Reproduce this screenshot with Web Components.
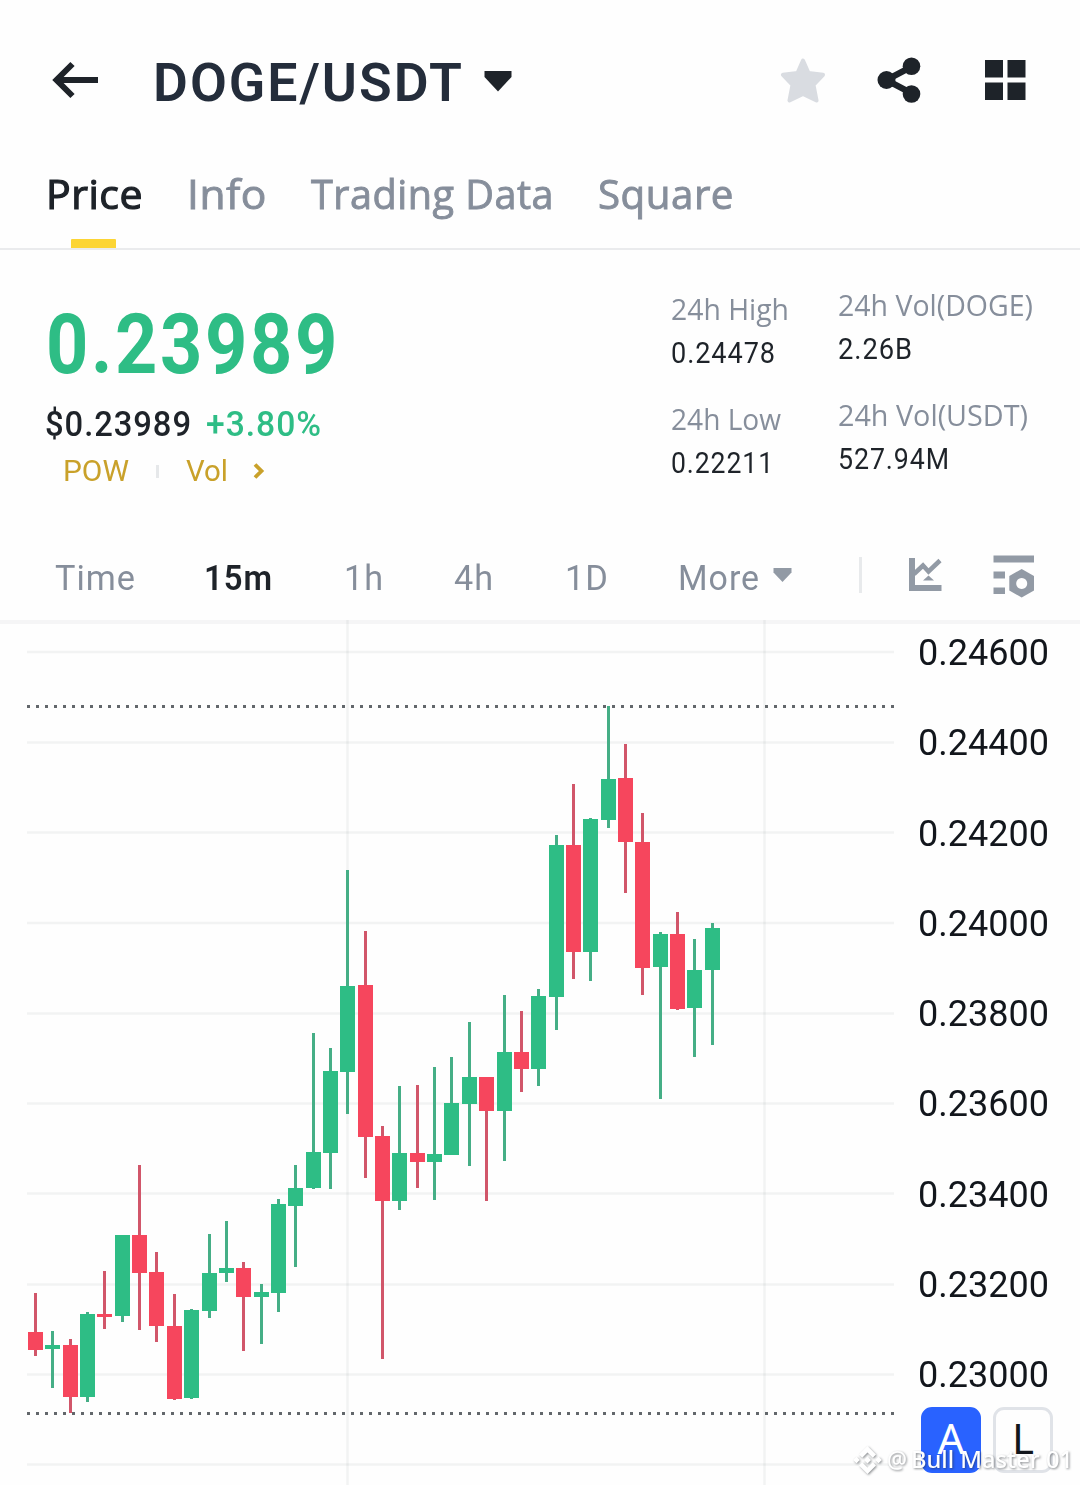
<!DOCTYPE html>
<html lang="en">
<head>
<meta charset="utf-8">
<title>DOGE/USDT</title>
<style>
  :root {
    --ink: #1e2329;
    --muted: #868e9b;
    --up: #2ebd85;
    --down: #f6465d;
    --line: #eaebed;
    --gold: #c9a12a;
  }
  body {
    margin: 0;
    width: 1080px;
    height: 1485px;
    overflow: hidden;
    background: #fefefe;
    color: var(--ink);
    font-family: "Open Sans", "Noto Sans", sans-serif;
  }
</style>
</head>
<body>
<trade-page></trade-page>

<script>
/*
single line of text stretched to a set width
 - attributes: w (px)
 */
class FitLabel extends HTMLElement {
  constructor() {
    super();
    this.attachShadow({ mode: 'open' });
    this.shadowRoot.innerHTML = `
      <style>
        :host { display: block; flex: none; white-space: nowrap; }
        span { display: inline-block; transform-origin: 0 50%; }
      </style>
      <span><slot></slot></span>
    `;
  }

  connectedCallback() {
    const w = parseFloat(this.getAttribute('w'));
    const span = this.shadowRoot.querySelector('span');
    this.style.width = w + 'px';
    const natural = span.getBoundingClientRect().width;
    if (natural) span.style.transform = `scaleX(${w / natural})`;
  }
}

/*
top bar: back, pair name, favourite, share, layout
 */
class PairHeader extends HTMLElement {
  constructor() {
    super();
    this.attachShadow({ mode: 'open' });
    this.shadowRoot.innerHTML = `
      <style>
        :host { display: flex; align-items: center; height: 160px; padding: 0 54px 0 52px; }
        svg { display: block; flex: none; fill: var(--ink); }
        .pair { margin: 6px 0 0 54px; font: 600 53.500px/76px Roboto, sans-serif; letter-spacing: 2px; color: #242d3b; }
        .caret { margin: 1px 0 0 20px; }
        .actions { display: flex; align-items: center; margin-left: auto; }
        .share { margin-left: 50px; }
        .grid { margin-left: 63px; }
      </style>
      <svg width="47" height="38" viewBox="0 0 47 38">
        <path d="M20.5 3 4.5 19l16 16M5 19h41" fill="none" stroke="#1e2329" stroke-width="6"/>
      </svg>
      <fit-label class="pair" w="311"><slot></slot></fit-label>
      <svg class="caret" width="28" height="22" viewBox="0 0 28 22"><path d="M.5 1h27v6L14 21.500.5 7z"/></svg>
      <div class="actions">
        <svg width="46" height="46" viewBox="0 0 46 46">
          <path d="M23 3.500 28.500 16 43 17.800 33.500 28 36.500 43.500 23 37 9.500 43.500 12.500 28 3 17.800 17.500 16z" fill="#d9dce1" stroke="#d9dce1" stroke-width="4" stroke-linejoin="round"/>
        </svg>
        <svg class="share" width="46" height="46" viewBox="0 0 46 46">
          <path d="M36 9.500 10.500 23 36 36.500" fill="none" stroke="#1e2329" stroke-width="6.500"/>
          <circle cx="10.500" cy="23" r="9"/><circle cx="35.500" cy="9.300" r="8.800"/><circle cx="35.500" cy="37" r="8.800"/>
        </svg>
        <svg class="grid" width="41" height="40" viewBox="0 0 41 40">
          <path d="M0 0h18v17.500H0zM22.500 0h18v17.500h-18zM0 22.500h18V40H0zM22.500 22.500h18V40h-18z"/>
        </svg>
      </div>
    `;
  }
}

/*
section tab
 - attributes: active, w
 */
class PageTab extends HTMLElement {
  constructor() {
    super();
    this.attachShadow({ mode: 'open' });
    this.shadowRoot.innerHTML = `
      <style>
        :host { display: flex; flex-direction: column; align-items: center; justify-content: space-between; height: 84px; }
        fit-label {
          font-size: 40.500px; line-height: 59px; letter-spacing: .5px; color: var(--muted);
          -webkit-text-stroke: .9px currentColor;
        }
        i { width: 45px; height: 9px; margin-right: 2px; border-radius: 1px 1px 0 0; }
        :host([active]) fit-label { color: var(--ink); -webkit-text-stroke-width: 1.200px; }
        :host([active]) i { background: #fcd535; }
      </style>
      <fit-label w="${this.getAttribute('w')}"><slot></slot></fit-label>
      <i></i>
    `;
  }
}

class PageTabs extends HTMLElement {
  constructor() {
    super();
    this.attachShadow({ mode: 'open' });
    this.shadowRoot.innerHTML = `
      <style>
        :host { display: flex; gap: 44px; height: 84px; padding: 4px 0 0 46px; border-bottom: 2px solid var(--line); }
      </style>
      <slot></slot>
    `;
  }
}

/*
last price with change and tags
 */
class PriceBlock extends HTMLElement {
  constructor() {
    super();
    this.attachShadow({ mode: 'open' });
    this.shadowRoot.innerHTML = `
      <style>
        :host { display: block; font-family: Roboto, sans-serif; }
        .last { font-size: 84px; line-height: 84px; font-weight: 700; letter-spacing: 3px; color: var(--up); }
        .row { display: flex; align-items: center; height: 40px; line-height: 40px; }
        .change { margin: 18px 0 6px -1px; gap: 14px; font-size: 35px; font-weight: 500; letter-spacing: 1px; }
        .up { color: var(--up); }
        .tags { padding-left: 17px; font-size: 29px; color: var(--gold); }
        .tags i { width: 3px; height: 13px; margin: 0 27px 0 27px; background: #e6e8ea; }
        svg { margin-left: 25px; }
      </style>
      <fit-label class="last" w="294">0.23989</fit-label>
      <div class="row change">
        <fit-label w="147">$0.23989</fit-label>
        <fit-label class="up" w="116">+3.80%</fit-label>
      </div>
      <div class="row tags">
        <fit-label w="66">POW</fit-label><i></i><fit-label w="42">Vol</fit-label>
        <svg width="12" height="18" viewBox="0 0 12 18"><path d="M2 2.500 8.500 9 2 15.500" fill="none" stroke="#c9a12a" stroke-width="3.800"/></svg>
      </div>
    `;
  }
}

/*
one 24h figure
 - attributes: label, value, lw, vw (text widths)
 */
class StatItem extends HTMLElement {
  constructor() {
    super();
    this.attachShadow({ mode: 'open' });
    const a = (name) => this.getAttribute(name);
    this.shadowRoot.innerHTML = `
      <style>
        :host { display: block; line-height: 44px; }
        .label { font-size: 29.500px; color: var(--muted); }
        .value { font-family: Roboto, sans-serif; font-size: 29.500px; letter-spacing: 1px; }
      </style>
      <fit-label class="label" w="${a('lw')}">${a('label')}</fit-label>
      <fit-label class="value" w="${a('vw')}">${a('value')}</fit-label>
    `;
  }
}

class PriceSummary extends HTMLElement {
  constructor() {
    super();
    this.attachShadow({ mode: 'open' });
    this.shadowRoot.innerHTML = `
      <style>
        :host { display: flex; height: 284px; padding: 0 46px; }
        price-block { margin-top: 53px; }
        .stats { display: flex; margin-left: auto; }
        .col { display: flex; flex-direction: column; gap: 22px; width: 167px; margin-top: 37px; }
        .col + .col { width: 196px; margin-top: 33.400px; gap: 21.500px; }
      </style>
      <price-block></price-block>
      <div class="stats">
        <div class="col">
          <stat-item label="24h High" value="0.24478" lw="118" vw="105"></stat-item>
          <stat-item label="24h Low" value="0.22211" lw="110" vw="103"></stat-item>
        </div>
        <div class="col">
          <stat-item label="24h Vol(DOGE)" value="2.26B" lw="195" vw="75"></stat-item>
          <stat-item label="24h Vol(USDT)" value="527.94M" lw="190" vw="112"></stat-item>
        </div>
      </div>
    `;
  }
}

/*
interval picker and chart tools
 */
class IntervalBar extends HTMLElement {
  constructor() {
    super();
    this.attachShadow({ mode: 'open' });
    this.shadowRoot.innerHTML = `
      <style>
        :host {
          display: flex; align-items: center; height: 86px; padding: 0 45px 0 55px; box-sizing: border-box;
          font: 34.500px/48px Roboto, sans-serif; letter-spacing: 1px; color: var(--muted);
        }
        fit-label { margin-top: 2px; }
        .active { color: var(--ink); font-weight: 600; }
        svg { display: block; flex: none; fill: #929aa5; }
        .caret { margin: -4px 0 0 13px; }
        i { width: 3px; height: 36px; margin: -4px 0 0 67px; background: #e8eaec; }
        .line { margin: -5px 0 0 47px; }
        .config { margin: -2px 0 0 51px; }
      </style>
      <fit-label w="81">Time</fit-label>
      <fit-label class="active" w="69" style="margin-left:68px">15m</fit-label>
      <fit-label w="40" style="margin-left:71px">1h</fit-label>
      <fit-label w="40" style="margin-left:70px">4h</fit-label>
      <fit-label w="44" style="margin-left:71px">1D</fit-label>
      <fit-label w="82" style="margin-left:69px">More</fit-label>
      <svg class="caret" width="19" height="14" viewBox="0 0 19 14"><path d="M.5 0h18v4.500L9.500 14 .5 4.500z"/></svg>
      <i></i>
      <svg class="line" width="33" height="33" viewBox="0 0 33 33">
        <path d="M0 0h6v27h26.500v6H0z"/>
        <path d="M5 16 14 7.500l5.500 6L31 2.500" fill="none" stroke="#929aa5" stroke-width="4.500"/>
        <path d="M19.500 17.500 25 22.500H14z"/>
      </svg>
      <svg class="config" width="42" height="43" viewBox="0 0 42 43">
        <path d="M.5.500H41v7H.5zM.5 16.500H12v7H.5zM.5 32.500H12v6.500H.5z"/>
        <path fill-rule="evenodd" d="M28.700 14 41 21v14.500l-12.300 7L16.300 35.500V21zM28.700 23a5.500 5.500 0 1 0 .01 0z"/>
      </svg>
    `;
  }
}

/*
candle chart, drawn in page pixels
 */
class CandleChart extends HTMLElement {
  constructor() {
    super();
    this.attachShadow({ mode: 'open' });

    // x, high, body top, body bottom, low, direction
    const candles = [
      [28, 1293, 1332, 1350, 1356, 'd'], [45, 1331, 1345, 1349, 1388, 'u'],
      [63, 1339, 1345, 1397, 1413, 'd'], [80, 1312, 1314, 1397, 1402, 'u'],
      [97, 1271, 1314, 1317, 1329, 'd'], [115, 1235, 1235, 1316, 1322, 'u'],
      [132, 1165, 1235, 1273, 1330, 'd'], [149, 1252, 1272, 1326, 1342, 'd'],
      [167, 1294, 1326, 1399, 1400, 'd'], [184, 1309, 1310, 1398, 1399, 'u'],
      [202, 1234, 1273, 1311, 1318, 'u'], [219, 1221, 1268, 1273, 1282, 'u'],
      [236, 1262, 1268, 1297, 1351, 'd'], [254, 1284, 1292, 1297, 1344, 'u'],
      [271, 1199, 1204, 1293, 1312, 'u'], [288, 1165, 1188, 1206, 1267, 'u'],
      [306, 1033, 1152, 1188, 1189, 'u'], [323, 1048, 1071, 1153, 1189, 'u'],
      [340, 870, 986, 1072, 1114, 'u'], [358, 931, 985, 1137, 1178, 'd'],
      [375, 1126, 1136, 1201, 1359, 'd'], [392, 1086, 1153, 1201, 1210, 'u'],
      [410, 1085, 1153, 1162, 1188, 'd'], [427, 1067, 1154, 1162, 1200, 'u'],
      [444, 1057, 1103, 1155, 1155, 'u'], [462, 1022, 1077, 1104, 1166, 'u'],
      [479, 1077, 1077, 1111, 1201, 'd'], [497, 995, 1052, 1111, 1161, 'u'],
      [514, 1011, 1052, 1069, 1092, 'd'], [531, 989, 996, 1069, 1086, 'u'],
      [549, 835, 845, 997, 1030, 'u'], [566, 784, 845, 952, 979, 'd'],
      [583, 818, 819, 952, 981, 'u'], [601, 706, 779, 820, 828, 'u'],
      [618, 744, 778, 842, 893, 'd'], [635, 813, 842, 968, 995, 'd'],
      [653, 932, 934, 967, 1099, 'u'], [670, 912, 934, 1009, 1010, 'd'],
      [687, 939, 970, 1008, 1057, 'u'], [705, 923, 928, 970, 1045, 'u'],
    ];
    const rows = [652, 742.5, 832.5, 923, 1013.5, 1103.5, 1193.5, 1284.5, 1374.5, 1464.5];
    const wick = { u: '#45ae86', d: '#d1566a' };
    const body = { u: 'var(--up)', d: 'var(--down)' };

    this.shadowRoot.innerHTML = `
      <style>
        :host { display: block; flex: none; width: 900px; height: 865px; }
        svg { display: block; }
        .grid { stroke: #20343b; stroke-opacity: .055; stroke-width: 2.500; }
        .mark { stroke: #62676b; stroke-width: 3; stroke-dasharray: 3 6; }
      </style>
      <svg width="900" height="865" viewBox="0 620 900 865">
        <g class="grid">
          ${rows.map((y) => `<path d="M27 ${y}H894"/>`).join('')}
          <path d="M347.500 620V1485M764.500 620V1485"/>
        </g>
        <path class="mark" d="M27 706.500H894M27 1413.500H894"/>
        ${candles.map(([x, hi, top, bottom, lo, dir]) => `
          <rect x="${x + 6}" y="${hi}" width="3" height="${lo - hi}" fill="${wick[dir]}"/>
          <rect x="${x}" y="${top}" width="15" height="${bottom - top}" fill="${body[dir]}"/>`).join('')}
      </svg>
    `;
  }
}

/*
price scale with the auto / log switches under it
 */
class PriceAxis extends HTMLElement {
  constructor() {
    super();
    this.attachShadow({ mode: 'open' });
    const prices = ['0.24600', '0.24400', '0.24200', '0.24000', '0.23800', '0.23600', '0.23400', '0.23200', '0.23000'];
    this.shadowRoot.innerHTML = `
      <style>
        :host { display: block; padding: 15px 0 0 18px; font-family: Roboto, sans-serif; color: #12161c; }
        .scale { display: flex; flex-direction: column; gap: 54.300px; font-size: 36px; line-height: 36px; }
        .modes { display: flex; gap: 12px; margin: 13.600px 0 0 3px; }
        .modes span {
          display: flex; align-items: center; justify-content: center; box-sizing: border-box;
          width: 60px; height: 66px; border: 3px solid #e0e3e8; border-radius: 11px;
          font: 42px/60px "Noto Sans", sans-serif; padding-bottom: 3px;
        }
        .modes .on { background: #2962ff; border-color: #2962ff; color: #fff; }
      </style>
      <div class="scale">${prices.map((p) => `<fit-label w="131">${p}</fit-label>`).join('')}</div>
      <div class="modes"><span class="on">A</span><span>L</span></div>
    `;
  }
}

class ChartPanel extends HTMLElement {
  constructor() {
    super();
    this.attachShadow({ mode: 'open' });
    this.shadowRoot.innerHTML = `
      <style>
        :host { display: flex; height: 865px; background: linear-gradient(#f5f5f6 4px, transparent 4px); }
      </style>
      <candle-chart></candle-chart>
      <price-axis></price-axis>
    `;
  }
}

/*
author mark laid over the chart corner
 */
class AuthorMark extends HTMLElement {
  constructor() {
    super();
    this.attachShadow({ mode: 'open' });
    this.shadowRoot.innerHTML = `
      <style>
        :host {
          position: absolute; left: 853px; top: 1443px; display: flex; align-items: center; height: 34px;
          font: 500 24px/34px "Noto Sans", sans-serif; color: #fff;
          filter: drop-shadow(1px 1px 1px rgba(30, 35, 41, .5));
        }
        svg { fill: #fff; }
        .at { margin: -2px 4px 0 5px; }
        .name { margin-top: -2px; }
      </style>
      <svg width="29" height="30" viewBox="0 0 29 30">
        <path d="M14.500 1 23 9.500l-3.200 3.200-5.300-5.300-5.300 5.300L6 9.500zM14.500 29 6 20.500l3.200-3.200 5.300 5.300 5.300-5.300L23 20.500zM3.500 11.700 6.800 15l-3.300 3.300L.2 15zM25.500 11.700l3.300 3.300-3.300 3.300-3.300-3.300zM14.500 11.500 18 15l-3.500 3.500L11 15z"/>
      </svg>
      <fit-label class="at" w="20">@</fit-label>
      <fit-label class="name" w="162"><slot></slot></fit-label>
    `;
  }
}

class TradePage extends HTMLElement {
  constructor() {
    super();
    this.attachShadow({ mode: 'open' });
    this.shadowRoot.innerHTML = `
      <style>
        :host { display: block; position: relative; height: 1485px; overflow: hidden; }
      </style>
      <pair-header>DOGE/USDT</pair-header>
      <page-tabs>
        <page-tab w="97" active>Price</page-tab>
        <page-tab w="80">Info</page-tab>
        <page-tab w="243">Trading Data</page-tab>
        <page-tab w="136">Square</page-tab>
      </page-tabs>
      <price-summary></price-summary>
      <interval-bar></interval-bar>
      <chart-panel></chart-panel>
      <author-mark>Bull Master 01</author-mark>
    `;
  }
}

customElements.define('fit-label', FitLabel);
customElements.define('pair-header', PairHeader);
customElements.define('page-tab', PageTab);
customElements.define('page-tabs', PageTabs);
customElements.define('price-block', PriceBlock);
customElements.define('stat-item', StatItem);
customElements.define('price-summary', PriceSummary);
customElements.define('interval-bar', IntervalBar);
customElements.define('candle-chart', CandleChart);
customElements.define('price-axis', PriceAxis);
customElements.define('chart-panel', ChartPanel);
customElements.define('author-mark', AuthorMark);
customElements.define('trade-page', TradePage);
</script>
</body>
</html>
